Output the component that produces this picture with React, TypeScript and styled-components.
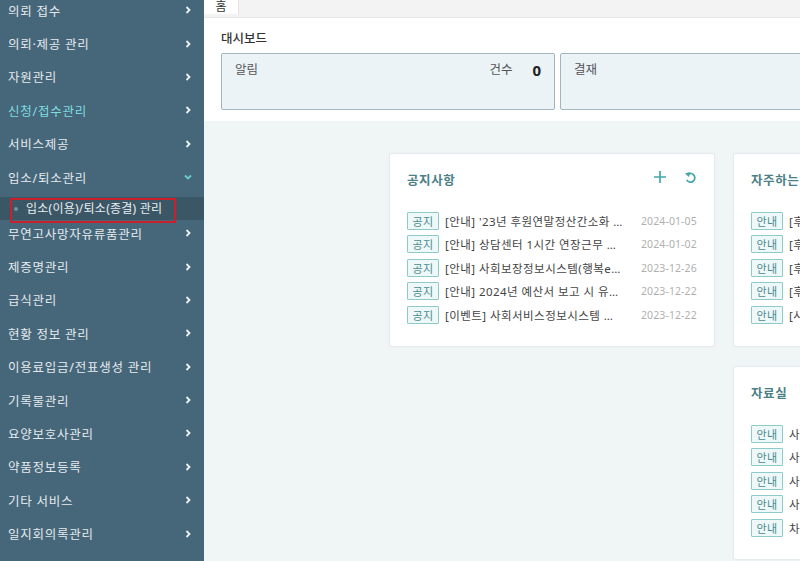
import React from "react";
import styled, { createGlobalStyle } from "styled-components";

const Global = createGlobalStyle`
  html, body { margin: 0; padding: 0; height: 100%; overflow: hidden; background: #f0f5f6; }
  body { font-family: "Noto Sans", "Noto Sans CJK KR", sans-serif; }
  * { box-sizing: border-box; }
`;

const Page = styled.div`
  display: flex;
  width: 800px;
  height: 561px;
  overflow: hidden;
`;

const Sidebar = styled.nav`
  position: relative;
  flex: 0 0 204px;
  height: 561px;
  overflow: hidden;
  background: #46667a;
`;

const MenuList = styled.ul`
  list-style: none;
  margin: -6.5px 0 0;
  padding: 0;
`;

const MenuItem = styled.li<{ $active?: boolean; $open?: boolean }>`
  display: flex;
  align-items: center;
  justify-content: space-between;
  height: 33.4px;
  padding: 0 10px 0 8px;
  font-size: 12.5px;
  letter-spacing: 0.75px;
  color: ${(p) => (p.$active ? "#7fdde0" : "#e4eaed")};
  svg { color: ${(p) => (p.$open ? "#6fc9cf" : "#eef2f4")}; flex: none; }
`;

const SubItem = styled.li`
  position: relative;
  display: flex;
  align-items: center;
  height: 23px;
  margin: 3px 0 -3.4px;
  padding-left: 26px;
  background: #3b5766;
  color: #e8edf0;
  font-size: 12px;
  letter-spacing: 0.25px;
  &::before {
    content: "";
    position: absolute;
    left: 14px;
    top: 10px;
    width: 4px;
    height: 4px;
    border-radius: 50%;
    background: #6f97a3;
  }
`;

const Highlight = styled.div`
  position: absolute;
  left: 10px;
  top: 198px;
  width: 166px;
  height: 25px;
  border: 2.5px solid #c9202c;
  pointer-events: none;
`;

const Main = styled.main`
  flex: 1;
  min-width: 0;
  height: 561px;
  overflow: hidden;
`;

const TabBar = styled.div`
  display: flex;
  height: 18px;
  background: #f3f3f3;
  border-bottom: 1px solid #e6e6e6;
`;

const Tab = styled.div`
  display: flex;
  align-items: center;
  justify-content: center;
  width: 35px;
  height: 18px;
  margin-top: -4px;
  padding-top: 2px;
  background: #fff;
  border-right: 1px solid #e2e2e2;
  color: #333;
  font-size: 12px;
`;

const DashboardSection = styled.section`
  height: 103px;
  padding: 12px 0 0 17px;
  background: #fff;
`;

const SectionTitle = styled.h2`
  margin: 0 0 5px;
  height: 18px;
  line-height: 18px;
  font-size: 12.5px;
  font-weight: 500;
  color: #333;
`;

const SummaryRow = styled.div`
  display: flex;
  gap: 5px;
`;

const SummaryCard = styled.div<{ $w: number }>`
  flex: 0 0 ${(p) => p.$w}px;
  display: flex;
  justify-content: space-between;
  height: 57px;
  padding: 7px 13px 0 13px;
  background: #ebf3f7;
  border: 1px solid #a3b5bf;
  border-radius: 2px;
  font-size: 12.5px;
  line-height: 18px;
  color: #555;
`;

const Count = styled.div`
  display: flex;
  gap: 20px;
  b { color: #222; font-size: 15px; font-weight: 700; line-height: 18px; }
`;

const Board = styled.div`
  display: grid;
  grid-template-columns: 326px 326px;
  column-gap: 18px;
  row-gap: 19px;
  padding: 32px 0 0 185px;
`;

const Panel = styled.article<{ $col?: number }>`
  grid-column: ${(p) => p.$col ?? "auto"};
  height: 194px;
  padding: 15px 18px 0 17px;
  background: #fff;
  border: 1px solid #e6ecee;
  border-radius: 3px;
  box-shadow: 0 0 2px rgba(90, 120, 130, 0.08);
`;

const PanelHead = styled.header`
  display: flex;
  align-items: center;
  justify-content: space-between;
  height: 20px;
  margin-bottom: 20px;
`;

const PanelTitle = styled.h3`
  margin: 0;
  font-size: 12.5px;
  font-weight: 600;
  letter-spacing: 0.6px;
  color: #4b8087;
  white-space: nowrap;
`;

const Actions = styled.div`
  display: flex;
  align-items: center;
  gap: 17px;
  color: #44a6a6;
  margin: -4px -1px 0 0;
`;

const Row = styled.div`
  display: flex;
  align-items: center;
  height: 23.5px;
`;

const Badge = styled.span`
  flex: none;
  display: flex;
  align-items: center;
  justify-content: center;
  width: 32px;
  height: 18px;
  border: 1.5px solid #8fcaca;
  border-radius: 1px;
  background: #eef8f8;
  color: #4a8a8f;
  font-size: 11px;
  letter-spacing: 0.4px;
`;

const RowText = styled.span`
  flex: 0 0 178px;
  margin-left: 6px;
  font-size: 11.5px;
  letter-spacing: 0.45px;
  color: #444;
  white-space: nowrap;
  overflow: hidden;
  text-overflow: ellipsis;
`;

const RowDate = styled.span`
  margin-left: 18px;
  font-size: 10.5px;
  letter-spacing: 0.1px;
  color: #b0b0b0;
  white-space: nowrap;
`;

const Chevron = ({ open }: { open?: boolean }) => (
  <svg width="12" height="12" viewBox="0 0 12 12" fill="none" stroke="currentColor" strokeWidth="1.8">
    {open ? <path d="M3 4.5 6 7.5 9 4.5" /> : <path d="M4.5 3 7.5 6 4.5 9" />}
  </svg>
);

const before = ["의뢰 접수", "의뢰·제공 관리", "자원관리", "신청/접수관리", "서비스제공", "입소/퇴소관리"];
const after = [
  "무연고사망자유류품관리", "제증명관리", "급식관리", "현황 정보 관리", "이용료입금/전표생성 관리",
  "기록물관리", "요양보호사관리", "약품정보등록", "기타 서비스", "일지회의록관리",
];

const notices = [
  ["[안내] '23년 후원연말정산간소화 안내 드립니다", "2024-01-05"],
  ["[안내] 상담센터 1시간 연장근무 안내입니다", "2024-01-02"],
  ["[안내] 사회보장정보시스템(행복e음) 안내", "2023-12-26"],
  ["[안내] 2024년 예산서 보고 시 유의사항 안내", "2023-12-22"],
  ["[이벤트] 사회서비스정보시스템 이용 만족도", "2023-12-22"],
];
const faq = ["[후원금 안내]", "[후원금 안내]", "[후원금 안내]", "[후원금 안내]", "[사업 안내]"];
const files = ["사회서비스 자료", "사회서비스 자료", "사회서비스 자료", "사회서비스 자료", "차세대 자료"];

export default function App() {
  return (
    <Page>
      <Global />
      <Sidebar>
        <MenuList>
          {before.map((m) => (
            <MenuItem key={m} $active={m === "신청/접수관리"} $open={m === "입소/퇴소관리"}>
              {m}
              <Chevron open={m === "입소/퇴소관리"} />
            </MenuItem>
          ))}
          <SubItem>입소(이용)/퇴소(종결) 관리</SubItem>
          {after.map((m) => (
            <MenuItem key={m}>
              {m}
              <Chevron />
            </MenuItem>
          ))}
        </MenuList>
        <Highlight />
      </Sidebar>
      <Main>
        <TabBar>
          <Tab>홈</Tab>
        </TabBar>
        <DashboardSection>
          <SectionTitle>대시보드</SectionTitle>
          <SummaryRow>
            <SummaryCard $w={334}>
              <span>알림</span>
              <Count>
                <span>건수</span>
                <b>0</b>
              </Count>
            </SummaryCard>
            <SummaryCard $w={334}>
              <span>결재</span>
            </SummaryCard>
          </SummaryRow>
        </DashboardSection>
        <Board>
          <Panel>
            <PanelHead>
              <PanelTitle>공지사항</PanelTitle>
              <Actions>
                <svg width="14" height="14" viewBox="0 0 14 14" fill="none" stroke="currentColor" strokeWidth="1.7">
                  <path d="M7 1v12M1 7h12" />
                </svg>
                <svg width="13" height="13" viewBox="0 0 14 14">
                  <path d="M5 3.2A4.6 4.6 0 1 1 3 9.6" fill="none" stroke="currentColor" strokeWidth="2" />
                  <path d="M1 2.8 6.2 1.2 5.6 6.6Z" fill="currentColor" />
                </svg>
              </Actions>
            </PanelHead>
            {notices.map(([t, d], i) => (
              <Row key={i}>
                <Badge>공지</Badge>
                <RowText>{t}</RowText>
                <RowDate>{d}</RowDate>
              </Row>
            ))}
          </Panel>
          <Panel>
            <PanelHead>
              <PanelTitle>자주하는 질문</PanelTitle>
            </PanelHead>
            {faq.map((t, i) => (
              <Row key={i}>
                <Badge>안내</Badge>
                <RowText>{t}</RowText>
              </Row>
            ))}
          </Panel>
          <Panel $col={2}>
            <PanelHead>
              <PanelTitle>자료실</PanelTitle>
            </PanelHead>
            {files.map((t, i) => (
              <Row key={i}>
                <Badge>안내</Badge>
                <RowText>{t}</RowText>
              </Row>
            ))}
          </Panel>
        </Board>
      </Main>
    </Page>
  );
}
